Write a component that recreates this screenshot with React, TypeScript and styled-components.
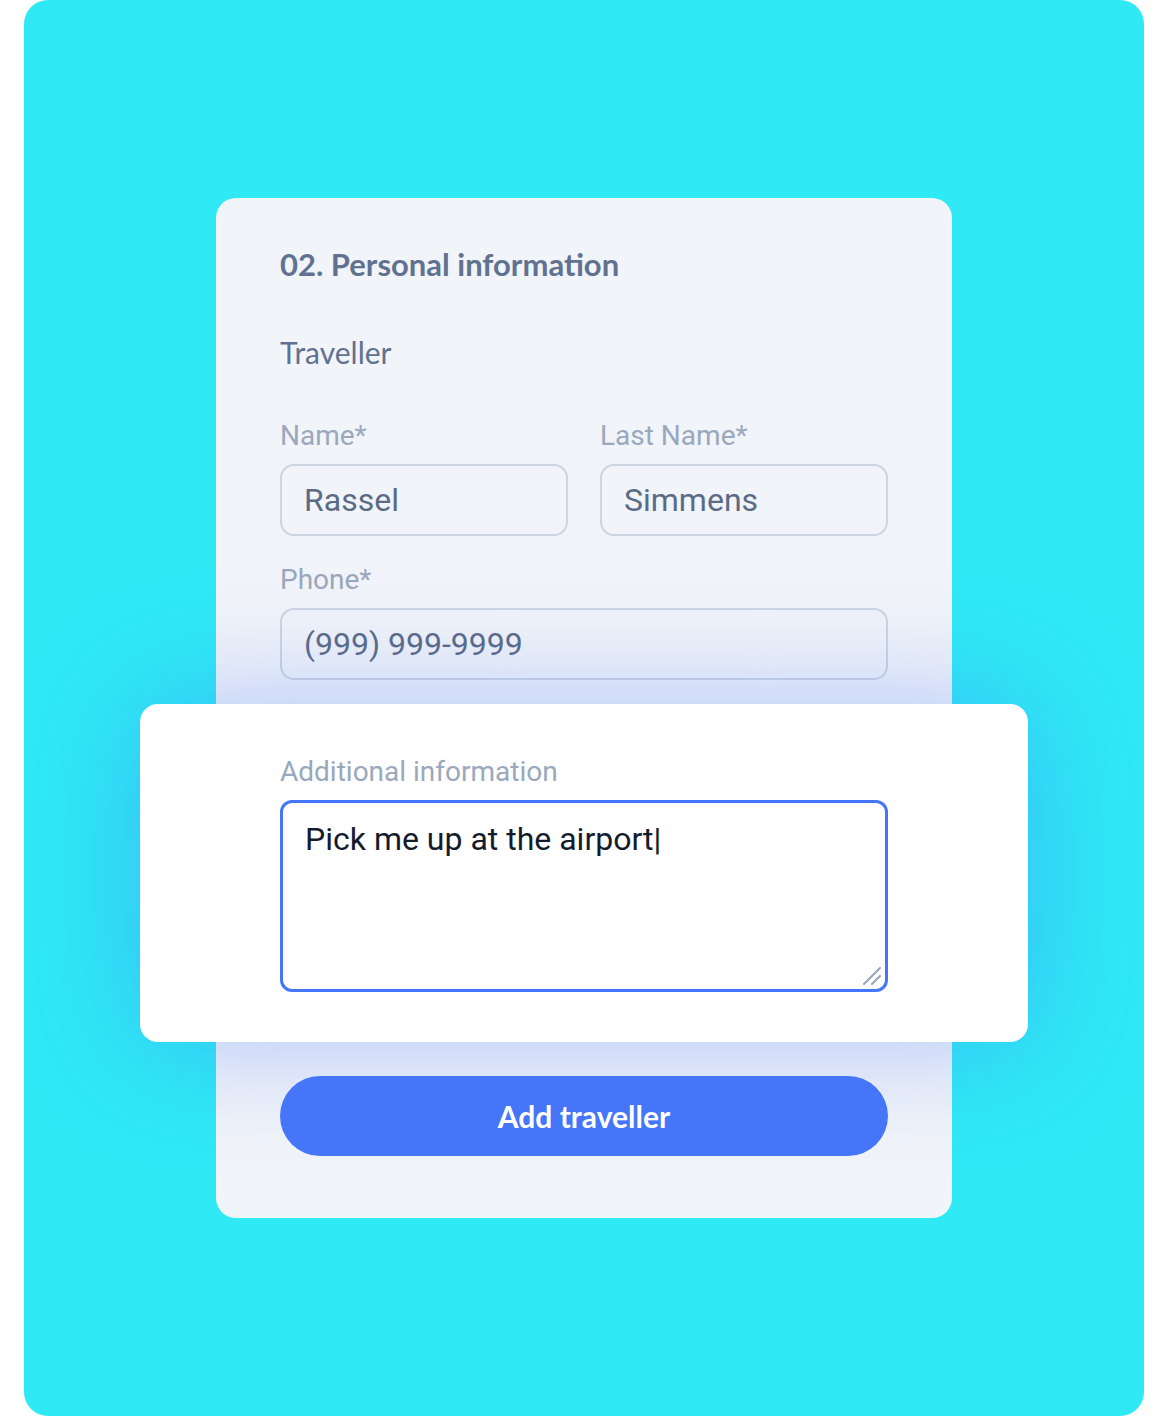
import React from 'react'
import styled, { createGlobalStyle } from 'styled-components'

const GlobalStyle = createGlobalStyle`
  html, body {
    margin: 0;
    padding: 0;
    background: #ffffff;
  }
  * {
    box-sizing: border-box;
  }
`

const Stage = styled.div`
  margin: 0 24px;
  height: 1416px;
  border-radius: 24px;
  background: #2fe9f5;
  padding-top: 198px;
  display: flex;
  justify-content: center;
  align-items: flex-start;
  overflow: hidden;
`

const Card = styled.div`
  width: 736px;
  background: #f1f4f9;
  border-radius: 20px;
  padding: 46px 64px 62px;
  display: flex;
  flex-direction: column;
`

const Heading = styled.h2`
  margin: 0;
  font-family: Lato, 'Open Sans', sans-serif;
  font-weight: 700;
  font-size: 31px;
  line-height: 40px;
  color: #607290;
`

const Sub = styled.h3`
  margin: 48px 0 0;
  font-family: Lato, 'Open Sans', sans-serif;
  font-weight: 400;
  font-size: 30px;
  line-height: 40px;
  color: #607290;
`

const Row = styled.div<{ $top: number; $cols: number }>`
  display: grid;
  grid-template-columns: repeat(${(p) => p.$cols}, 1fr);
  gap: 32px;
  margin-top: ${(p) => p.$top}px;
`

const Field = styled.label`
  display: flex;
  flex-direction: column;
`

const Label = styled.span`
  font-family: Roboto, 'Liberation Sans', sans-serif;
  font-size: 28px;
  line-height: 32px;
  color: #9aa8bd;
  margin-bottom: 12px;
`

const Input = styled.input`
  width: 100%;
  height: 72px;
  border: 2px solid #cdd5e3;
  border-radius: 14px;
  background: transparent;
  padding: 0 22px;
  font-family: Roboto, 'Liberation Sans', sans-serif;
  font-size: 32px;
  color: #5b6b86;
  outline: none;
`

const Overlay = styled.div`
  margin: 24px -140px 0;
  background: #ffffff;
  border-radius: 18px;
  padding: 52px 140px 50px;
  display: flex;
  flex-direction: column;
  box-shadow: 0 0 120px rgba(69, 117, 248, 0.4);
`

const AreaBox = styled.div`
  position: relative;
`

const Area = styled.textarea`
  display: block;
  width: 100%;
  height: 192px;
  border: 3px solid #4575f8;
  border-radius: 12px;
  padding: 16px 22px;
  font-family: Roboto, 'Liberation Sans', sans-serif;
  font-size: 32px;
  line-height: 40px;
  color: #131b2d;
  background: #ffffff;
  outline: none;
  resize: none;
`

const Grip = styled.svg`
  position: absolute;
  right: 6px;
  bottom: 6px;
  width: 20px;
  height: 20px;
  pointer-events: none;
`

const Button = styled.button`
  margin-top: 34px;
  height: 80px;
  border: none;
  border-radius: 40px;
  background: #4575f8;
  color: #ffffff;
  font-family: Lato, 'Open Sans', sans-serif;
  font-weight: 700;
  font-size: 30px;
  cursor: pointer;
`

const App: React.FC = () => {
  return (
    <>
      <GlobalStyle />
      <Stage>
        <Card>
          <Heading>02. Personal information</Heading>
          <Sub>Traveller</Sub>
          <Row $top={48} $cols={2}>
            <Field>
              <Label>Name*</Label>
              <Input defaultValue="Rassel" />
            </Field>
            <Field>
              <Label>Last Name*</Label>
              <Input defaultValue="Simmens" />
            </Field>
          </Row>
          <Row $top={28} $cols={1}>
            <Field>
              <Label>Phone*</Label>
              <Input defaultValue="(999) 999-9999" />
            </Field>
          </Row>
          <Overlay>
            <Field>
              <Label>Additional information</Label>
              <AreaBox>
                <Area defaultValue="Pick me up at the airport|" />
                <Grip viewBox="0 0 20 20">
                  <path d="M2 18 L18 2 M10 18 L18 10" stroke="#97a4ba" strokeWidth="2" strokeLinecap="round" />
                </Grip>
              </AreaBox>
            </Field>
          </Overlay>
          <Button>Add traveller</Button>
        </Card>
      </Stage>
    </>
  )
}

export default App
